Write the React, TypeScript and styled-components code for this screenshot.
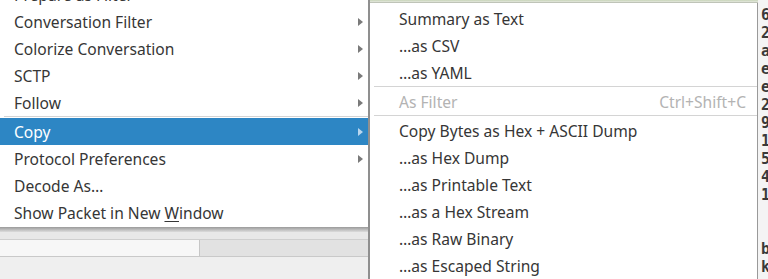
import React from 'react';
import styled, { createGlobalStyle } from 'styled-components';

const GlobalStyle = createGlobalStyle`
  html, body {
    margin: 0;
    padding: 0;
    background: #ececec;
    overflow: hidden;
  }
`;

type Entry =
  | { kind: 'item'; label: React.ReactNode; sub?: boolean; active?: boolean; disabled?: boolean; shortcut?: string }
  | { kind: 'sep' };

const contextItems: Entry[] = [
  { kind: 'item', label: 'Prepare as Filter', sub: true },
  { kind: 'item', label: 'Conversation Filter', sub: true },
  { kind: 'item', label: 'Colorize Conversation', sub: true },
  { kind: 'item', label: 'SCTP', sub: true },
  { kind: 'item', label: 'Follow', sub: true },
  { kind: 'sep' },
  { kind: 'item', label: 'Copy', sub: true, active: true },
  { kind: 'item', label: 'Protocol Preferences', sub: true },
  { kind: 'item', label: 'Decode As…' },
  {
    kind: 'item',
    label: (
      <>
        Show Packet in New <u>W</u>indow
      </>
    ),
  },
];

const copyItems: Entry[] = [
  { kind: 'item', label: 'Summary as Text' },
  { kind: 'item', label: '…as CSV' },
  { kind: 'item', label: '…as YAML' },
  { kind: 'sep' },
  { kind: 'item', label: 'As Filter', disabled: true, shortcut: 'Ctrl+Shift+C' },
  { kind: 'sep' },
  { kind: 'item', label: 'Copy Bytes as Hex + ASCII Dump' },
  { kind: 'item', label: '…as Hex Dump' },
  { kind: 'item', label: '…as Printable Text' },
  { kind: 'item', label: '…as a Hex Stream' },
  { kind: 'item', label: '…as Raw Binary' },
  { kind: 'item', label: '…as Escaped String' },
];

const hexChars = ['6', '2', 'a', 'e', 'e', '2', '9', '1', '5', '4', '1', '', '', 'b', 'k'];

const Arrow: React.FC<{ $light?: boolean }> = ({ $light }) => (
  <svg width='5' height='8' viewBox='0 0 5 8'>
    <path d='M0 0 L5 4 L0 8 Z' fill={$light ? '#b9d6ee' : '#7a7a7a'} />
  </svg>
);

const renderEntries = (entries: Entry[], indent: number, right: number) =>
  entries.map((e, i) =>
    e.kind === 'sep' ? (
      <Separator key={i} />
    ) : (
      <Item key={i} $active={e.active} $disabled={e.disabled} $indent={indent} $right={right}>
        <Label>{e.label}</Label>
        {e.shortcut && <Shortcut>{e.shortcut}</Shortcut>}
        {e.sub && <Arrow $light={e.active} />}
      </Item>
    )
  );

const App: React.FC = () => {
  return (
    <>
      <GlobalStyle />
      <Screen>
        <LeftColumn>
          <ContextMenu>{renderEntries(contextItems, 14, 5)}</ContextMenu>
          <MenuShadow />
          <Gap />
          <StatusStrip>
            <StatusField />
            <StatusRest />
          </StatusStrip>
          <Filler />
        </LeftColumn>
        <SubColumn>
          <TopBar>
            <Grip>······</Grip>
          </TopBar>
          <Submenu>{renderEntries(copyItems, 29, 11)}</Submenu>
        </SubColumn>
        <HexColumn>
          {hexChars.map((c, i) => (
            <HexLine key={i}>{c}</HexLine>
          ))}
        </HexColumn>
      </Screen>
    </>
  );
};

export default App;

const Screen = styled.div`
  width: 768px;
  height: 279px;
  overflow: hidden;
  display: flex;
  font-family: 'Noto Sans', 'Open Sans', sans-serif;
  font-size: 15.6px;
  color: #363636;
`;

const LeftColumn = styled.div`
  width: 368px;
  flex-shrink: 0;
  display: flex;
  flex-direction: column;
  border-right: 2px solid #8f8f8f;
`;

const ContextMenu = styled.div`
  margin-top: -19px;
  background: #ffffff;
  padding-bottom: 1px;
`;

const Item = styled.div<{ $active?: boolean; $disabled?: boolean; $indent: number; $right: number }>`
  height: 27px;
  display: flex;
  align-items: center;
  padding: 0 ${({ $right }) => $right}px 0 ${({ $indent }) => $indent}px;
  background: ${({ $active }) => ($active ? '#2d86c4' : 'transparent')};
  color: ${({ $active, $disabled }) => ($active ? '#ffffff' : $disabled ? '#b3b3b3' : '#363636')};
  white-space: nowrap;

  & svg {
    margin-left: auto;
    flex-shrink: 0;
  }
`;

const Label = styled.span`
  flex: 1;

  & u {
    text-underline-offset: 2px;
  }
`;

const Shortcut = styled.span`
  color: #b3b3b3;
`;

const Separator = styled.div`
  height: 1px;
  margin: 0 0 1px 4px;
  background: #d4d4d4;
`;

const MenuShadow = styled.div`
  height: 5px;
  background: linear-gradient(#9a9a9a, #dcdcdc);
`;

const Gap = styled.div`
  height: 7px;
  background: #e8e8e8;
  border-bottom: 1px solid #cfcfcf;
`;

const StatusStrip = styled.div`
  height: 16px;
  display: flex;
  border-bottom: 1px solid #c9c9c9;
`;

const StatusField = styled.div`
  width: 199px;
  background: #f7f7f7;
  border-right: 1px solid #c6c6c6;
`;

const StatusRest = styled.div`
  flex: 1;
  background: #e2e2e2;
`;

const Filler = styled.div`
  flex: 1;
  background: #efefef;
`;

const SubColumn = styled.div`
  width: 388px;
  flex-shrink: 0;
  display: flex;
  flex-direction: column;
`;

const TopBar = styled.div`
  height: 6px;
  background: linear-gradient(#c7d4b8, #e4e8de);
  border-bottom: 1px solid #bfc4b8;
  display: flex;
  justify-content: center;
  align-items: flex-end;
  overflow: hidden;
`;

const Grip = styled.span`
  font-size: 8px;
  line-height: 6px;
  color: #a0a69a;
  margin-left: -120px;
`;

const Submenu = styled.div`
  flex: 1;
  background: #ffffff;
  border-right: 1px solid #9a9a9a;
  padding-top: 2px;
`;

const HexColumn = styled.div`
  flex: 1;
  background: #f4f4f4;
  padding: 6px 0 0 3px;
  font-family: 'DejaVu Sans Mono', monospace;
  font-size: 15px;
  font-weight: bold;
  color: #3a3a3a;
  overflow: hidden;
`;

const HexLine = styled.div`
  height: 18px;
  line-height: 18px;
`;
